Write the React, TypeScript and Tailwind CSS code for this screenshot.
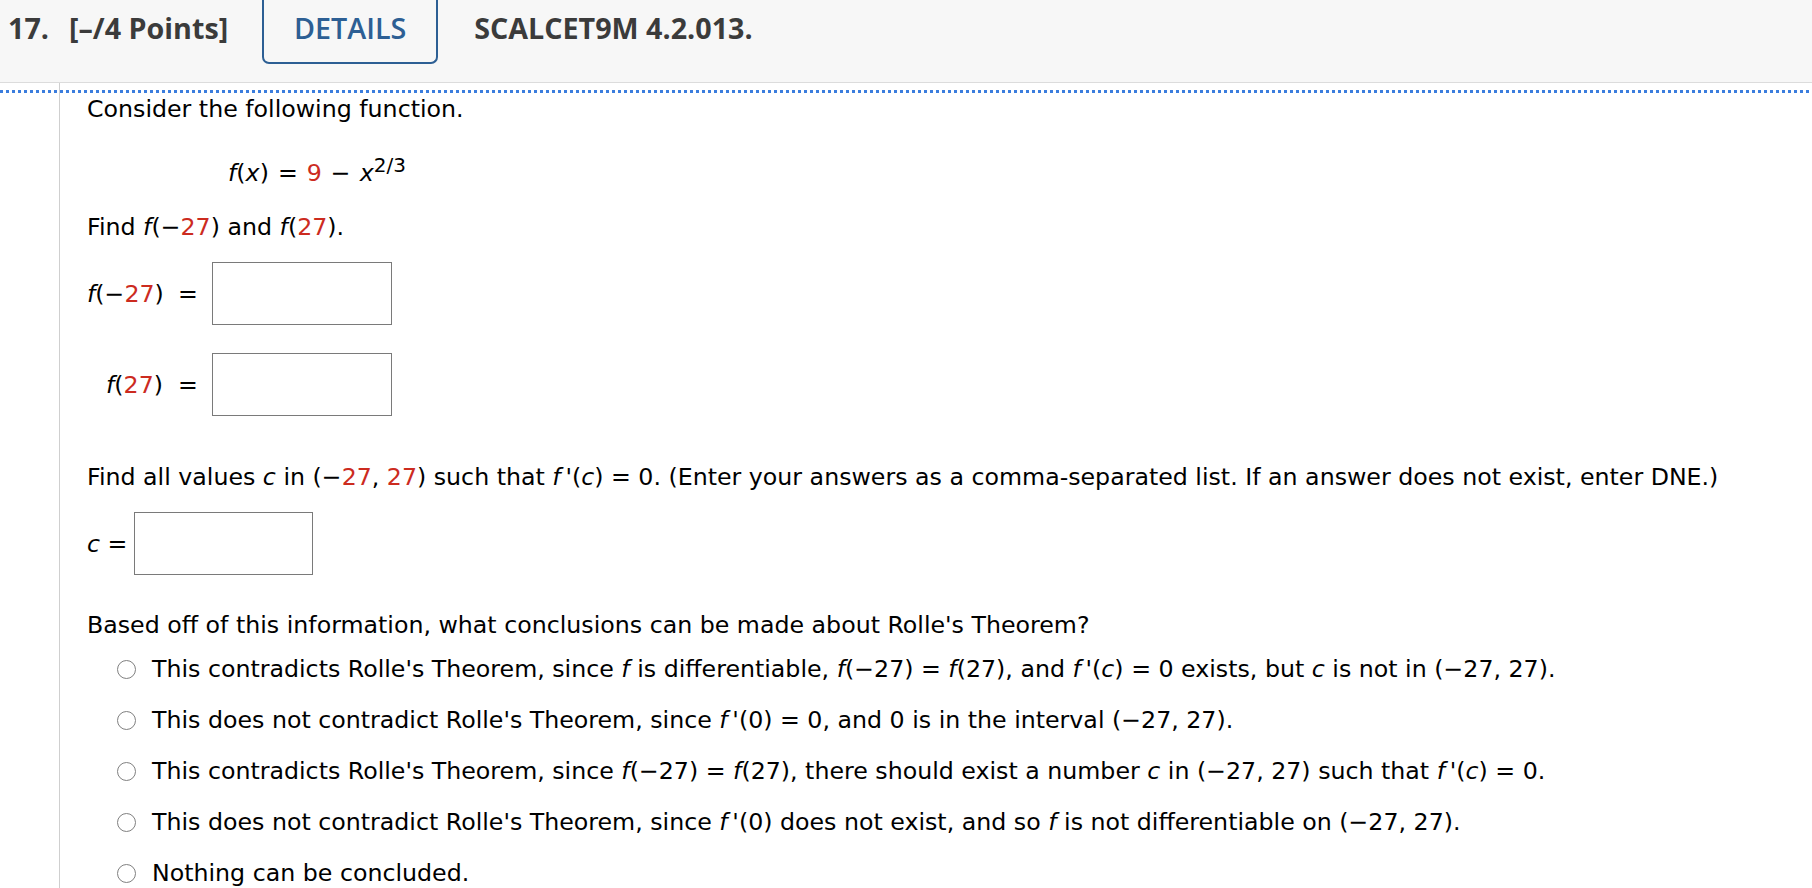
import React from "react";

const body = { fontFamily: '"DejaVu Sans", Verdana, sans-serif' };
const head = { fontFamily: '"Open Sans", "Liberation Sans", sans-serif' };

function Red({ children }: { children: React.ReactNode }) {
  return <span className="text-[#cc2b1f]">{children}</span>;
}

function AnswerBox({ w = "w-[180px]" }: { w?: string }) {
  return <div className={`${w} h-[63px] border border-[#7a7a7a] bg-white`} />;
}

function Radio({ children }: { children: React.ReactNode }) {
  return (
    <label className="flex items-center h-[30px] ml-[30px]">
      <span className="w-[19px] h-[19px] rounded-full border-[1.3px] border-[#808080] bg-white shrink-0" />
      <span className="ml-[16px] whitespace-nowrap">{children}</span>
    </label>
  );
}

const fp = <i>f&thinsp;'</i>;

export default function App() {
  return (
    <div className="h-screen w-full bg-white overflow-hidden text-black" style={body}>
      {/* question header */}
      <header
        className="h-[83px] bg-[#f7f7f7] border-b border-[#dcdcdc] flex items-start text-[28.7px] font-bold text-[#3b3b3b]"
        style={head}
      >
        <span className="ml-[8px] mt-[8px] leading-[40px]">17.</span>
        <span className="ml-[20px] mt-[8px] leading-[40px]">[–/4 Points]</span>
        <div className="ml-[34px] w-[176px] h-[64px] border-2 border-t-0 border-[#2d5f94] rounded-b-[7px] flex items-center justify-center pb-[6px] text-[#2d5f94] font-semibold">
          DETAILS
        </div>
        <span className="ml-[36px] mt-[8px] leading-[40px]">SCALCET9M 4.2.013.</span>
      </header>

      <div className="relative h-full">
        {/* focus outline */}
        <div className="absolute left-0 right-0 top-[7px] h-[3px] bg-[linear-gradient(to_right,#3b7ddd_50%,transparent_50%)] bg-[length:6px_3px] bg-repeat-x" />

        <div className="ml-[59px] h-full border-l border-[#cfcfcf] pl-[27px] pt-[11px] text-[23.7px] leading-[30px]">
          <p>Consider the following function.</p>

          <p className="mt-[31px] ml-[141px] whitespace-nowrap">
            <i>f</i>(<i>x</i>)<span className="mx-[9px]">=</span>
            <Red>9</Red>
            <span className="mx-[9px]">−</span>
            <i>x</i>
            <span className="text-[20px] leading-none align-[9px]">2/3</span>
          </p>

          <p className="mt-[24px]">
            Find <i>f</i>(−<Red>27</Red>) and <i>f</i>(<Red>27</Red>).
          </p>

          <div className="mt-[20px] flex items-center">
            <span className="w-[76px] text-right whitespace-nowrap">
              <i>f</i>(−<Red>27</Red>)
            </span>
            <span className="ml-[15px] w-[19px]">=</span>
            <div className="ml-[15px]">
              <AnswerBox />
            </div>
          </div>

          <div className="mt-[28px] flex items-center">
            <span className="w-[76px] text-right whitespace-nowrap">
              <i>f</i>(<Red>27</Red>)
            </span>
            <span className="ml-[15px] w-[19px]">=</span>
            <div className="ml-[15px]">
              <AnswerBox />
            </div>
          </div>

          <p className="mt-[46px] whitespace-nowrap">
            Find all values <i>c</i> in (−<Red>27</Red>, <Red>27</Red>) such that {fp}(<i>c</i>) = 0. (Enter your
            answers as a comma-separated list. If an answer does not exist, enter DNE.)
          </p>

          <div className="mt-[20px] flex items-center">
            <span className="whitespace-nowrap">
              <i>c</i> =
            </span>
            <div className="ml-[7px]">
              <AnswerBox w="w-[179px]" />
            </div>
          </div>

          <p className="mt-[35px]">Based off of this information, what conclusions can be made about Rolle's Theorem?</p>

          <div className="mt-[14px] flex flex-col gap-[21px]">
            <Radio>
              This contradicts Rolle's Theorem, since <i>f</i> is differentiable, <i>f</i>(−27) = <i>f</i>(27), and {fp}(
              <i>c</i>) = 0 exists, but <i>c</i> is not in (−27, 27).
            </Radio>
            <Radio>
              This does not contradict Rolle's Theorem, since {fp}(0) = 0, and 0 is in the interval (−27, 27).
            </Radio>
            <Radio>
              This contradicts Rolle's Theorem, since <i>f</i>(−27) = <i>f</i>(27), there should exist a number <i>c</i> in
              (−27, 27) such that {fp}(<i>c</i>) = 0.
            </Radio>
            <Radio>
              This does not contradict Rolle's Theorem, since {fp}(0) does not exist, and so <i>f</i> is not
              differentiable on (−27, 27).
            </Radio>
            <Radio>Nothing can be concluded.</Radio>
          </div>
        </div>
      </div>
    </div>
  );
}
